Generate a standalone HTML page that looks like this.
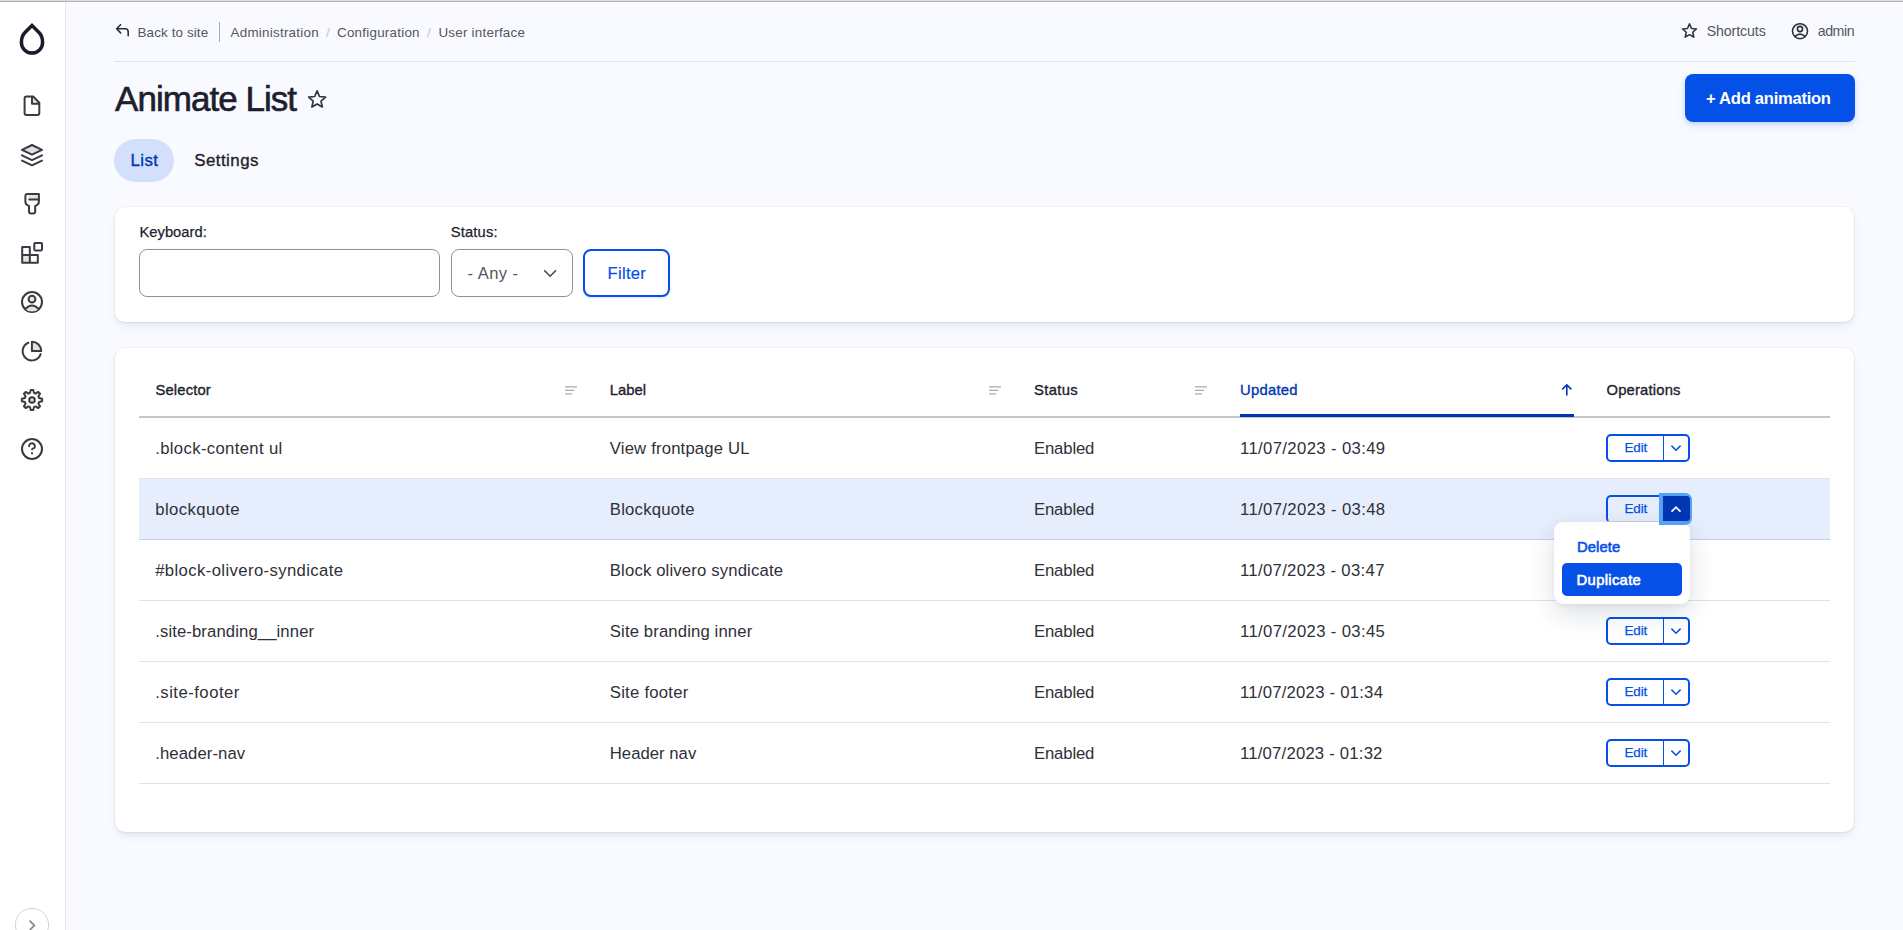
<!DOCTYPE html>
<html lang="en"><head><meta charset="utf-8"><title>Animate List | Drupal</title>
<style>
html,body{margin:0;padding:0;}
body{width:1903px;height:930px;overflow:hidden;position:relative;background:#f9faff;font-family:"Liberation Sans",Arial,sans-serif;}
.t{position:absolute;white-space:pre;display:block;}
.b{position:absolute;box-sizing:border-box;}
svg{position:absolute;overflow:visible;}
</style></head><body>
<div class="b" style="left:0px;top:0px;width:1903px;height:1px;background:#dcdde2;"></div>
<div class="b" style="left:0px;top:1px;width:1903px;height:1px;background:#b1b2b7;"></div>
<div class="b" style="left:66px;top:2px;width:1837px;height:1px;background:#fdfdff;"></div>
<div class="b" style="left:0px;top:2px;width:66px;height:928px;background:#fff;border-right:1px solid #e8e8eb;"></div>
<svg width="66" height="930" style="left:0;top:0" fill="none" stroke-linecap="round" stroke-linejoin="round"><path d="M32 25.5 L39 32.5 C41.4 35 42.6 38.6 42.6 42.5 A10.6 10.6 0 0 1 21.4 42.5 C21.4 38.6 22.6 35 25 32.5Z" stroke="#1b1b2b" stroke-width="3.5" stroke-linejoin="miter"/><g stroke="#393a42" stroke-width="2"><path d="M32 96.5 H33.2 L39.3 102.8 V103.8 H32Z" fill="#e4e4e4" stroke="none"/><path d="M26.6 96.5 H33.2 L39.3 102.8 V113 a2 2 0 0 1 -2 2 H26.6 a2 2 0 0 1 -2 -2 V98.5 a2 2 0 0 1 2 -2Z M32 97 V103.8 H39"/><path d="M32 145 L42 149.9 L32 154.7 L22 149.9Z" fill="#e0e0e0"/><path d="M22 155.3 L32 160.1 L42 155.3 M22 160.6 L32 165.3 L42 160.6"/><path d="M28.5 195 H38.9 V199.4 H28.5Z" fill="#e4e4e4" stroke="none"/><path d="M27.4 194 H38.9 V201.6 Q38.9 204.6 36.4 205.4 L35.2 205.9 V211.4 a2 2 0 0 1 -2 2 h-2.2 a2 2 0 0 1 -2 -2 V205.9 L27.8 205.4 Q25.4 204.6 25.4 201.6 V196 a2 2 0 0 1 2 -2Z M29.3 199.4 H38.9"/><rect x="22.2" y="255.1" width="7.6" height="7.7" fill="#e4e4e4" stroke="none"/><path d="M22.2 247 H29.8 V255.1 H37.8 V262.8 H22.2Z M29.8 255.1 V262.8 M22.2 255.1 H29.8"/><rect x="34.3" y="243" width="7.7" height="7.4" rx="0.8"/><circle cx="32" cy="302" r="10"/><circle cx="32" cy="299.2" r="3.4" fill="#e4e4e4"/><path d="M25.2 309.2 Q32 301.6 38.8 309.2 Q32 314 25.2 309.2Z" fill="#e4e4e4" stroke="none"/><path d="M25.2 309.2 Q32 301.6 38.8 309.2"/><path d="M31.9 341.7 A9.4 9.4 0 0 1 41.3 351 H31.9Z" fill="#e0e0e0"/><path d="M28.4 342.7 A9.2 9.2 0 1 0 40.6 354.1"/></g></svg>
<svg width="66" height="930" style="left:0;top:0" fill="none" stroke="#393a42" stroke-width="2" stroke-linecap="round" stroke-linejoin="round"><path d="M30.72 389.88 L33.28 389.88 L33.95 392.86 L35.67 393.57 L38.25 391.94 L40.06 393.75 L38.43 396.33 L39.14 398.05 L42.12 398.72 L42.12 401.28 L39.14 401.95 L38.43 403.67 L40.06 406.25 L38.25 408.06 L35.67 406.43 L33.95 407.14 L33.28 410.12 L30.72 410.12 L30.05 407.14 L28.33 406.43 L25.75 408.06 L23.94 406.25 L25.57 403.67 L24.86 401.95 L21.88 401.28 L21.88 398.72 L24.86 398.05 L25.57 396.33 L23.94 393.75 L25.75 391.94 L28.33 393.57 L30.05 392.86Z"/><circle cx="32" cy="400" r="2.8" fill="#e0e0e0"/><circle cx="32" cy="449" r="10"/><path d="M29.1 446.3 A2.9 2.9 0 1 1 34.1 448.2 Q32.2 448.8 32 449.3" stroke-width="1.9"/><circle cx="32" cy="453.3" r="1.15" fill="#393a42" stroke="none"/><circle cx="32" cy="925" r="16.7" stroke="#d3d4d9" stroke-width="1" fill="#fff"/><path d="M29.6 920.6 L34.4 925.4 L29.6 930.2" stroke="#828288" stroke-width="1.6" stroke-linecap="butt" stroke-linejoin="miter"/></svg>
<svg width="20" height="20" style="left:114px;top:20px" fill="none" stroke="#2e2e36" stroke-width="1.6" stroke-linecap="round" stroke-linejoin="round"><path d="M6.6 4.7 L2.6 8.8 L6.6 12.9 M2.8 8.8 H11.2 Q14.2 8.8 14.2 11.8 V15.7"/></svg>
<span class="t " style="left:137.50px;top:22.70px;font-size:13.4px;line-height:20px;color:#55565b;letter-spacing:0.131px;">Back to site</span>
<div class="b" style="left:219px;top:22px;width:1px;height:20px;background:#a9aab5;"></div>
<span class="t " style="left:230.60px;top:22.70px;font-size:13.4px;line-height:20px;color:#55565b;letter-spacing:0.246px;">Administration</span>
<span class="t " style="left:326.00px;top:22.70px;font-size:13.4px;line-height:20px;color:#c4c5cc;">/</span>
<span class="t " style="left:337.00px;top:22.70px;font-size:13.4px;line-height:20px;color:#55565b;letter-spacing:0.242px;">Configuration</span>
<span class="t " style="left:427.00px;top:22.70px;font-size:13.4px;line-height:20px;color:#c4c5cc;">/</span>
<span class="t " style="left:438.40px;top:22.70px;font-size:13.4px;line-height:20px;color:#55565b;letter-spacing:0.246px;">User interface</span>
<div class="b" style="left:114px;top:61px;width:1741px;height:1px;background:#e2e3ea;"></div>
<svg width="1903" height="130" style="left:0;top:0" fill="none" stroke="#34343c" stroke-width="1.6" stroke-linejoin="round"><path d="M1689.50 23.90 L1691.50 28.45 L1696.44 28.94 L1692.73 32.25 L1693.79 37.11 L1689.50 34.60 L1685.21 37.11 L1686.27 32.25 L1682.56 28.94 L1687.50 28.45Z"/></svg>
<span class="t " style="left:1706.70px;top:20.93px;font-size:14.2px;line-height:21px;color:#55565b;letter-spacing:-0.110px;">Shortcuts</span>
<svg width="24" height="24" style="left:1788.4px;top:18.8px" fill="none" stroke="#2e2e36" stroke-width="1.6" stroke-linecap="round"><circle cx="12" cy="12.2" r="7.5"/><circle cx="12" cy="10" r="2.6"/><path d="M7 17.4 Q12 12.8 17 17.4"/></svg>
<span class="t " style="left:1817.70px;top:20.93px;font-size:14.2px;line-height:21px;color:#55565b;letter-spacing:-0.443px;">admin</span>
<span class="t " style="left:115.00px;top:73.22px;font-size:35px;line-height:52px;color:#1e1e2e;letter-spacing:-0.962px;-webkit-text-stroke:0.65px #1e1e2e;">Animate List</span>
<svg width="1903" height="130" style="left:0;top:0" fill="none" stroke="#34343c" stroke-width="1.7" stroke-linejoin="round"><path d="M317.10 90.90 L319.51 96.48 L325.56 97.05 L321.00 101.07 L322.33 107.00 L317.10 103.90 L311.87 107.00 L313.20 101.07 L308.64 97.05 L314.69 96.48Z"/></svg>
<div class="b" style="left:1685px;top:74px;width:170px;height:48px;background:#0550e6;border-radius:8px;box-shadow:0 2px 4px rgba(5,80,230,.12),0 4px 10px rgba(5,80,230,.12);"></div>
<span class="t " style="left:1706.00px;top:86.09px;font-size:16.6px;line-height:25px;color:#fff;font-weight:700;letter-spacing:-0.283px;">+ Add animation</span>
<div class="b" style="left:114px;top:139px;width:60px;height:43px;background:#d3e0fb;border-radius:21.5px;"></div>
<span class="t " style="left:130.50px;top:147.99px;font-size:16.9px;line-height:25px;color:#0036b1;letter-spacing:0.401px;-webkit-text-stroke:0.35px #0036b1;">List</span>
<span class="t " style="left:194.20px;top:147.99px;font-size:16.9px;line-height:25px;color:#1e1e2e;letter-spacing:0.463px;-webkit-text-stroke:0.35px #1e1e2e;">Settings</span>
<div class="b" style="left:115px;top:207px;width:1739px;height:115px;background:#fff;border-radius:10px;box-shadow:0 0 0 1px rgba(30,30,40,.03),0 1px 2px rgba(20,45,82,.03),0 3px 4px rgba(20,45,82,.03),0 5px 10px rgba(20,45,82,.05);"></div>
<span class="t " style="left:139.40px;top:221.25px;font-size:14.7px;line-height:22px;color:#1e1e2e;letter-spacing:0.062px;-webkit-text-stroke:0.25px #1e1e2e;">Keyboard:</span>
<span class="t " style="left:450.80px;top:221.25px;font-size:14.7px;line-height:22px;color:#1e1e2e;letter-spacing:0.174px;-webkit-text-stroke:0.25px #1e1e2e;">Status:</span>
<div class="b" style="left:139px;top:249px;width:301px;height:48px;background:#fff;border:1px solid #8e929c;border-radius:8px;"></div>
<div class="b" style="left:451px;top:249px;width:122px;height:48px;background:#fff;border:1px solid #8e929c;border-radius:8px;"></div>
<span class="t " style="left:467.60px;top:261.09px;font-size:16.6px;line-height:25px;color:#55565b;letter-spacing:0.422px;">- Any -</span>
<svg width="20" height="14" style="left:540px;top:266px" fill="none" stroke="#46474d" stroke-width="1.6" stroke-linecap="butt"><path d="M4.2 4.2 L10.1 10.2 L16 4.2"/></svg>
<div class="b" style="left:583px;top:249px;width:87px;height:48px;background:#fff;border:2px solid #0550e6;border-radius:8px;box-shadow:0 1px 2px rgba(5,80,230,.15);"></div>
<span class="t " style="left:607.60px;top:261.09px;font-size:16.6px;line-height:25px;color:#0550e6;letter-spacing:0.283px;-webkit-text-stroke:0.2px #0550e6;">Filter</span>
<div class="b" style="left:115px;top:348px;width:1739px;height:484px;background:#fff;border-radius:10px;box-shadow:0 0 0 1px rgba(30,30,40,.03),0 1px 2px rgba(20,45,82,.03),0 3px 4px rgba(20,45,82,.03),0 5px 10px rgba(20,45,82,.05);"></div>
<div class="b" style="left:139px;top:479px;width:1691px;height:61px;background:#e6edfc;"></div>
<div class="b" style="left:139px;top:416px;width:1691px;height:2px;background:#c6c6c8;"></div>
<div class="b" style="left:1240px;top:414px;width:334px;height:3px;background:#0036b1;"></div>
<div class="b" style="left:139px;top:478px;width:1691px;height:1px;background:#dfe3ee;"></div>
<div class="b" style="left:139px;top:539px;width:1691px;height:1px;background:#c5d1ea;"></div>
<div class="b" style="left:139px;top:600px;width:1691px;height:1px;background:#e2e3e8;"></div>
<div class="b" style="left:139px;top:661px;width:1691px;height:1px;background:#e2e3e8;"></div>
<div class="b" style="left:139px;top:722px;width:1691px;height:1px;background:#e2e3e8;"></div>
<div class="b" style="left:139px;top:783px;width:1691px;height:1px;background:#e2e3e8;"></div>
<span class="t " style="left:155.40px;top:379.22px;font-size:14.8px;line-height:22px;color:#1e1e2e;letter-spacing:0.158px;-webkit-text-stroke:0.35px #1e1e2e;">Selector</span>
<span class="t " style="left:609.80px;top:379.22px;font-size:14.8px;line-height:22px;color:#1e1e2e;letter-spacing:-0.002px;-webkit-text-stroke:0.35px #1e1e2e;">Label</span>
<span class="t " style="left:1034.00px;top:379.22px;font-size:14.8px;line-height:22px;color:#1e1e2e;letter-spacing:0.349px;-webkit-text-stroke:0.35px #1e1e2e;">Status</span>
<span class="t " style="left:1240.00px;top:379.22px;font-size:14.8px;line-height:22px;color:#0036b1;letter-spacing:0.275px;-webkit-text-stroke:0.35px #0036b1;">Updated</span>
<span class="t " style="left:1606.50px;top:379.22px;font-size:14.8px;line-height:22px;color:#1e1e2e;letter-spacing:0.179px;-webkit-text-stroke:0.35px #1e1e2e;">Operations</span>
<svg width="14" height="10" style="left:565px;top:384.6px" stroke="#a9aab3" stroke-width="1.2"><path d="M0.1 1.9 H12.1 M0.1 5.4 H9.1 M0.1 8.8 H7"/></svg>
<svg width="14" height="10" style="left:988.6px;top:384.6px" stroke="#a9aab3" stroke-width="1.2"><path d="M0.1 1.9 H12.1 M0.1 5.4 H9.1 M0.1 8.8 H7"/></svg>
<svg width="14" height="10" style="left:1194.5px;top:384.6px" stroke="#a9aab3" stroke-width="1.2"><path d="M0.1 1.9 H12.1 M0.1 5.4 H9.1 M0.1 8.8 H7"/></svg>
<svg width="14" height="14" style="left:1560px;top:383px" fill="none" stroke="#0036b1" stroke-width="1.6"><path d="M6.8 12.6 V2 M2.2 6.4 L6.8 1.8 L11.4 6.4"/></svg>
<span class="t " style="left:155.20px;top:436.06px;font-size:16.7px;line-height:25px;color:#2f3038;letter-spacing:0.350px;">.block-content ul</span>
<span class="t " style="left:609.80px;top:436.06px;font-size:16.7px;line-height:25px;color:#2f3038;letter-spacing:0.170px;">View frontpage UL</span>
<span class="t " style="left:1034.00px;top:436.06px;font-size:16.7px;line-height:25px;color:#2f3038;letter-spacing:-0.147px;">Enabled</span>
<span class="t " style="left:1240.00px;top:436.06px;font-size:16.7px;line-height:25px;color:#2f3038;letter-spacing:0.367px;">11/07/2023 - 03:49</span>
<div class="b" style="left:1606px;top:434px;width:84px;height:28px;border:2px solid #0550e6;border-radius:5px;background:#fff;"></div>
<div class="b" style="left:1663px;top:436px;width:1.3px;height:24px;background:#0550e6;"></div>
<svg width="14" height="10" style="left:1669px;top:442.6px" fill="none" stroke="#0550e6" stroke-width="1.5"><path d="M2.4 2.6 L7 7.2 L11.6 2.6"/></svg>
<span class="t " style="left:1624.60px;top:437.70px;font-size:13.4px;line-height:20px;color:#0550e6;letter-spacing:-0.163px;-webkit-text-stroke:0.25px #0550e6;">Edit</span>
<span class="t " style="left:155.20px;top:497.06px;font-size:16.7px;line-height:25px;color:#2f3038;letter-spacing:0.414px;">blockquote</span>
<span class="t " style="left:609.80px;top:497.06px;font-size:16.7px;line-height:25px;color:#2f3038;letter-spacing:0.231px;">Blockquote</span>
<span class="t " style="left:1034.00px;top:497.06px;font-size:16.7px;line-height:25px;color:#2f3038;letter-spacing:-0.147px;">Enabled</span>
<span class="t " style="left:1240.00px;top:497.06px;font-size:16.7px;line-height:25px;color:#2f3038;letter-spacing:0.367px;">11/07/2023 - 03:48</span>
<div class="b" style="left:1606px;top:495px;width:84px;height:28px;border:2px solid #0550e6;border-bottom-color:#c9cdd8;border-radius:5px;background:#e6edfc;"></div>
<span class="t " style="left:1624.60px;top:498.70px;font-size:13.4px;line-height:20px;color:#0550e6;letter-spacing:-0.163px;-webkit-text-stroke:0.25px #0550e6;">Edit</span>
<span class="t " style="left:155.20px;top:558.06px;font-size:16.7px;line-height:25px;color:#2f3038;letter-spacing:0.386px;">#block-olivero-syndicate</span>
<span class="t " style="left:609.80px;top:558.06px;font-size:16.7px;line-height:25px;color:#2f3038;letter-spacing:0.157px;">Block olivero syndicate</span>
<span class="t " style="left:1034.00px;top:558.06px;font-size:16.7px;line-height:25px;color:#2f3038;letter-spacing:-0.147px;">Enabled</span>
<span class="t " style="left:1240.00px;top:558.06px;font-size:16.7px;line-height:25px;color:#2f3038;letter-spacing:0.326px;">11/07/2023 - 03:47</span>
<span class="t " style="left:155.20px;top:619.06px;font-size:16.7px;line-height:25px;color:#2f3038;letter-spacing:0.106px;">.site-branding__inner</span>
<span class="t " style="left:609.80px;top:619.06px;font-size:16.7px;line-height:25px;color:#2f3038;letter-spacing:0.129px;">Site branding inner</span>
<span class="t " style="left:1034.00px;top:619.06px;font-size:16.7px;line-height:25px;color:#2f3038;letter-spacing:-0.147px;">Enabled</span>
<span class="t " style="left:1240.00px;top:619.06px;font-size:16.7px;line-height:25px;color:#2f3038;letter-spacing:0.355px;">11/07/2023 - 03:45</span>
<div class="b" style="left:1606px;top:617px;width:84px;height:28px;border:2px solid #0550e6;border-radius:5px;background:#fff;"></div>
<div class="b" style="left:1663px;top:619px;width:1.3px;height:24px;background:#0550e6;"></div>
<svg width="14" height="10" style="left:1669px;top:625.6px" fill="none" stroke="#0550e6" stroke-width="1.5"><path d="M2.4 2.6 L7 7.2 L11.6 2.6"/></svg>
<span class="t " style="left:1624.60px;top:620.70px;font-size:13.4px;line-height:20px;color:#0550e6;letter-spacing:-0.163px;-webkit-text-stroke:0.25px #0550e6;">Edit</span>
<span class="t " style="left:155.20px;top:680.06px;font-size:16.7px;line-height:25px;color:#2f3038;letter-spacing:0.483px;">.site-footer</span>
<span class="t " style="left:609.80px;top:680.06px;font-size:16.7px;line-height:25px;color:#2f3038;letter-spacing:0.238px;">Site footer</span>
<span class="t " style="left:1034.00px;top:680.06px;font-size:16.7px;line-height:25px;color:#2f3038;letter-spacing:-0.147px;">Enabled</span>
<span class="t " style="left:1240.00px;top:680.06px;font-size:16.7px;line-height:25px;color:#2f3038;letter-spacing:0.238px;">11/07/2023 - 01:34</span>
<div class="b" style="left:1606px;top:678px;width:84px;height:28px;border:2px solid #0550e6;border-radius:5px;background:#fff;"></div>
<div class="b" style="left:1663px;top:680px;width:1.3px;height:24px;background:#0550e6;"></div>
<svg width="14" height="10" style="left:1669px;top:686.6px" fill="none" stroke="#0550e6" stroke-width="1.5"><path d="M2.4 2.6 L7 7.2 L11.6 2.6"/></svg>
<span class="t " style="left:1624.60px;top:681.70px;font-size:13.4px;line-height:20px;color:#0550e6;letter-spacing:-0.163px;-webkit-text-stroke:0.25px #0550e6;">Edit</span>
<span class="t " style="left:155.20px;top:741.06px;font-size:16.7px;line-height:25px;color:#2f3038;letter-spacing:0.088px;">.header-nav</span>
<span class="t " style="left:609.80px;top:741.06px;font-size:16.7px;line-height:25px;color:#2f3038;letter-spacing:0.019px;">Header nav</span>
<span class="t " style="left:1034.00px;top:741.06px;font-size:16.7px;line-height:25px;color:#2f3038;letter-spacing:-0.147px;">Enabled</span>
<span class="t " style="left:1240.00px;top:741.06px;font-size:16.7px;line-height:25px;color:#2f3038;letter-spacing:0.208px;">11/07/2023 - 01:32</span>
<div class="b" style="left:1606px;top:739px;width:84px;height:28px;border:2px solid #0550e6;border-radius:5px;background:#fff;"></div>
<div class="b" style="left:1663px;top:741px;width:1.3px;height:24px;background:#0550e6;"></div>
<svg width="14" height="10" style="left:1669px;top:747.6px" fill="none" stroke="#0550e6" stroke-width="1.5"><path d="M2.4 2.6 L7 7.2 L11.6 2.6"/></svg>
<span class="t " style="left:1624.60px;top:742.70px;font-size:13.4px;line-height:20px;color:#0550e6;letter-spacing:-0.163px;-webkit-text-stroke:0.25px #0550e6;">Edit</span>
<div class="b" style="left:1554px;top:522px;width:136px;height:82px;background:#fff;border-radius:9px;box-shadow:0 2px 4px rgba(20,45,82,.05),0 10px 26px rgba(20,45,82,.15);"></div>
<span class="t " style="left:1576.90px;top:536.22px;font-size:14.8px;line-height:22px;color:#0550e6;letter-spacing:0.104px;-webkit-text-stroke:0.6px #0550e6;">Delete</span>
<div class="b" style="left:1562px;top:563px;width:120px;height:33px;background:#0550e6;border-radius:5px;"></div>
<span class="t " style="left:1576.60px;top:569.22px;font-size:14.8px;line-height:22px;color:#fff;letter-spacing:0.313px;-webkit-text-stroke:0.6px #fff;">Duplicate</span>
<div class="b" style="left:1659.2px;top:492.9px;width:32.6px;height:31.9px;background:#55a1f6;border-radius:0 6.5px 6.5px 0;"></div>
<div class="b" style="left:1663.1px;top:496.3px;width:26.5px;height:25px;background:#0036b1;border-radius:0 3.5px 3.5px 0;"></div>
<svg width="14" height="10" style="left:1669px;top:503.6px" fill="none" stroke="#fff" stroke-width="1.7"><path d="M2.5 7.7 L7 3.2 L11.5 7.7"/></svg>
</body></html>
